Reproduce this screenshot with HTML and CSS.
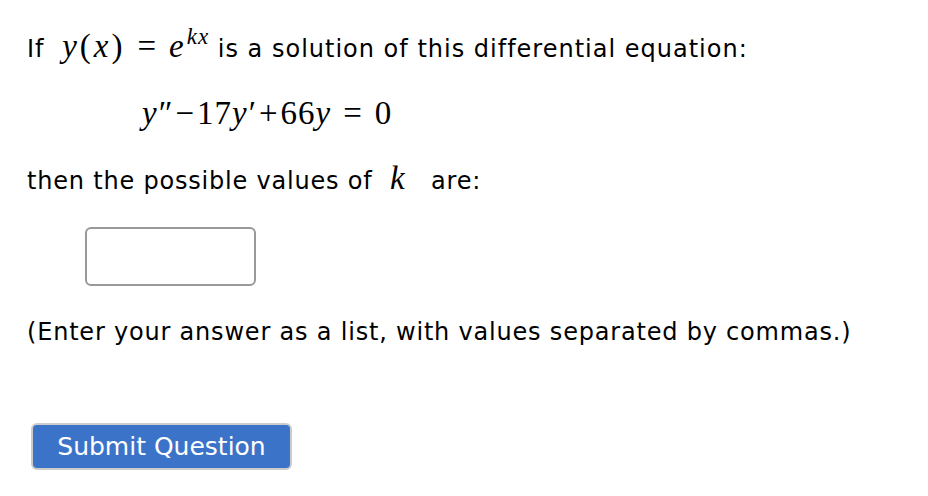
FILE: index.html
```html
<!DOCTYPE html>
<html>
<head>
<meta charset="utf-8">
<link rel="stylesheet" href="styles.css">
</head>
<body>
<div class="problem">
  <p class="line first">If <span class="math lead"><i>y</i><span class="paren">(</span><i>x</i><span class="paren">)</span><span class="rel">=</span><i>e</i><sup><i>k</i><i>x</i></sup></span> is a solution of this differential equation:</p>
  <div class="display"><i>y</i><span class="prime">″</span><span class="bin">−</span>17<i>y</i><span class="prime">′</span><span class="bin">+</span>66<i>y</i><span class="rel">=</span>0</div>
  <p class="line third">then the possible values of <span class="math k"><i>k</i></span> are:</p>
  <div class="answer"><input type="text" class="ans-input"></div>
  <p class="line note">(Enter your answer as a list, with values separated by commas.)</p>
  <div class="actions"><button class="submit">Submit Question</button></div>
</div>
</body>
</html>
```
FILE: styles.css
```css
html, body {
  margin: 0;
  padding: 0;
  background: #ffffff;
}
body {
  font-family: "DejaVu Sans", Verdana, sans-serif;
  font-size: 24px;
  color: #000;
}
.problem {
  padding: 29px 0 0 27px;
  display: flex;
  flex-direction: column;
  align-items: flex-start;
}
.line {
  margin: 0;
  line-height: 40px;
  letter-spacing: 0.8px;
}
.first {
  letter-spacing: 1px;
}
.math {
  font-family: "Liberation Serif", "DejaVu Serif", serif;
  font-size: 33px;
  line-height: 1;
  letter-spacing: 1px;
}
.math i, .display i {
  font-style: italic;
}
.lead {
  margin: 0 0 0 9px;
}
.paren {
  margin: 0 2px;
}
.math sup {
  font-size: 23px;
  line-height: 0;
  vertical-align: 13px;
  margin-left: 2px;
}
.rel {
  margin: 0 12px;
}
.k {
  margin: 0 17px 0 9px;
}
.display {
  font-family: "Liberation Serif", "DejaVu Serif", serif;
  font-size: 33px;
  line-height: 40px;
  letter-spacing: 1px;
  margin: 24px 0 0 115px;
}
.prime {
  margin-left: 1px;
}
.bin {
  margin: 0 2px;
}
.display .rel {
  margin: 0 12px;
}
.third {
  margin-top: 28px;
}
.answer {
  margin: 26px 0 0 58px;
  display: flex;
}
.ans-input {
  box-sizing: border-box;
  width: 171px;
  height: 59px;
  border: 2px solid #999999;
  border-radius: 6px;
  background: #fff;
  outline: none;
  padding: 0 8px;
  margin: 0;
}
.note {
  margin-top: 26px;
}
.actions {
  margin: 71px 0 0 4px;
  display: flex;
}
.submit {
  box-sizing: border-box;
  width: 261px;
  height: 47px;
  background: #3b73c9;
  color: #fff;
  border: 2px solid #cccccc;
  border-radius: 6px;
  font-family: "DejaVu Sans", Verdana, sans-serif;
  font-size: 25px;
  padding: 0;
  margin: 0;
}
```
